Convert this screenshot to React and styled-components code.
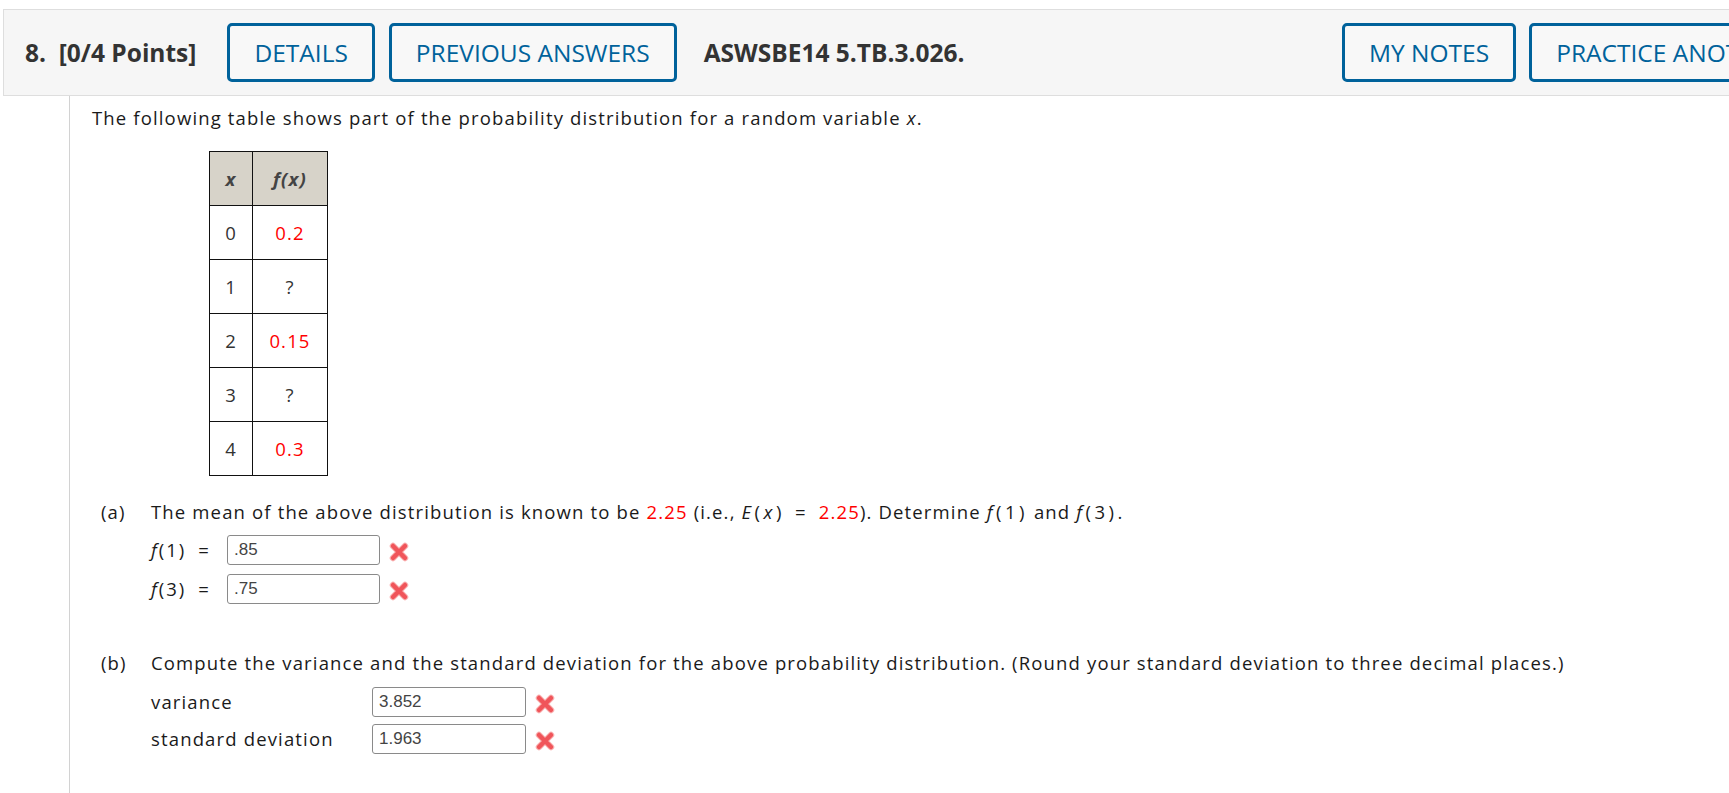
import React from 'react';
import styled, { createGlobalStyle } from 'styled-components';

const GlobalStyle = createGlobalStyle`
  html, body {
    margin: 0;
    padding: 0;
    background: #fff;
    overflow: hidden;
  }
`;

const Page = styled.div`
  width: 1900px;
  padding-top: 9px;
`;

const Header = styled.div`
  display: flex;
  align-items: center;
  height: 85px;
  margin-left: 3px;
  padding-left: 21px;
  padding-right: 86px;
  background: #f6f6f6;
  border: 1px solid #dedede;
  font-family: 'Open Sans', sans-serif;
  font-size: 24.5px;
`;

const Points = styled.div`
  font-weight: 700;
  color: #333;
  margin-right: 31px;
  white-space: pre;
`;

const HeadButton = styled.button`
  flex-shrink: 0;
  height: 59px;
  padding: 0 24px;
  margin-right: ${(p) => p.$gap ?? 14}px;
  background: #f8f8f8;
  border: 3px solid #00629b;
  border-radius: 5px;
  color: #00629b;
  font-family: 'Open Sans', sans-serif;
  font-size: 24.5px;
  white-space: nowrap;
`;

const Title = styled.div`
  flex: 1;
  margin-left: 13px;
  font-weight: 700;
  color: #333;
  white-space: nowrap;
`;

const Content = styled.div`
  margin-left: 69px;
  height: calc(100vh - 96px);
  border-left: 1px solid #d2d2d2;
  padding: 11px 0 0 22px;
  font-family: 'Open Sans', 'Noto Sans', sans-serif;
  font-size: 18.5px;
  letter-spacing: 1.15px;
  line-height: 22px;
  color: #1a1a1a;
`;

const Prompt = styled.p`
  margin: 0;
`;

const DistTable = styled.table`
  margin: 22px 0 0 117px;
  border-collapse: collapse;
  color: #333;

  th, td {
    border: 1.5px solid #111;
    height: 53px;
    padding: 0;
    text-align: center;
  }
  th {
    background: #d7d3c9;
    font-style: italic;
    font-weight: 700;
    color: #444;
  }
  .c1 {
    width: 42px;
  }
  .c2 {
    width: 74px;
  }
`;

const Red = styled.span`
  color: #f00;
`;

const Math = styled.span`
  letter-spacing: ${(p) => p.$ls ?? 3.5}px;
`;

const Eq = styled.span`
  margin: 0 12px 0 10px;
`;

const Part = styled.div`
  display: flex;
  margin: ${(p) => p.$top}px 0 0 9px;
`;

const PartLabel = styled.div`
  width: 50px;
  flex-shrink: 0;
`;

const PartBody = styled.div`
  display: flex;
  flex-direction: column;
`;

const AnswerRow = styled.div`
  display: flex;
  align-items: center;
  height: 31px;
  margin-top: ${(p) => p.$top}px;
`;

const RowLabel = styled.div`
  width: ${(p) => p.$w}px;
  white-space: pre;
`;

const AnswerInput = styled.input`
  box-sizing: border-box;
  width: ${(p) => p.$w || 153}px;
  height: 30px;
  padding: 0 6px;
  border: 1px solid #8a8a8a;
  border-radius: 3px;
  background: #fff;
  font-family: 'Liberation Sans', Arial, sans-serif;
  font-size: 17px;
  letter-spacing: 0;
  color: #444;
  outline: none;
`;

const WrongMark = styled.svg`
  width: 20px;
  height: 20px;
  margin-left: 9px;
  margin-top: 4px;
`;

function Wrong() {
  return (
    <WrongMark viewBox="0 0 20 20">
      <path d="M4 4 L16 16 M16 4 L4 16" stroke="#f9b4b4" strokeWidth="6.5" strokeLinecap="round" />
      <path d="M4 4 L16 16 M16 4 L4 16" stroke="#f0555a" strokeWidth="4.5" strokeLinecap="round" />
    </WrongMark>
  );
}

const rows = [
  ['0', <Red>0.2</Red>],
  ['1', '?'],
  ['2', <Red>0.15</Red>],
  ['3', '?'],
  ['4', <Red>0.3</Red>],
];

export default function App() {
  return (
    <>
      <GlobalStyle />
      <Page>
        <Header>
          <Points>8.  [0/4 Points]</Points>
          <HeadButton>DETAILS</HeadButton>
          <HeadButton>PREVIOUS ANSWERS</HeadButton>
          <Title>ASWSBE14 5.TB.3.026.</Title>
          <HeadButton $gap={13}>MY NOTES</HeadButton>
          <HeadButton $gap={0}>PRACTICE ANOTHER</HeadButton>
        </Header>
        <Content>
          <Prompt>
            The following table shows part of the probability distribution for a random variable <i>x</i>.
          </Prompt>
          <DistTable>
            <thead>
              <tr>
                <th className="c1">x</th>
                <th className="c2">f(x)</th>
              </tr>
            </thead>
            <tbody>
              {rows.map(([x, fx]) => (
                <tr key={x}>
                  <td>{x}</td>
                  <td>{fx}</td>
                </tr>
              ))}
            </tbody>
          </DistTable>

          <Part $top={25}>
            <PartLabel>(a)</PartLabel>
            <PartBody>
              <div>
                The mean of the above distribution is known to be <Red>2.25</Red> (i.e.,{' '}
                <Math>
                  <i>E</i>(<i>x</i>)
                </Math>
                <Eq>=</Eq>
                <Red>2.25</Red>). Determine{' '}
                <Math>
                  <i>f</i>(1)
                </Math>{' '}
                and{' '}
                <Math>
                  <i>f</i>(3)
                </Math>
                .
              </div>
              <AnswerRow $top={11}>
                <RowLabel $w={76}>
                  <Math $ls={2}>
                    <i>f</i>(1)
                  </Math>
                  {'  ='}
                </RowLabel>
                <AnswerInput readOnly value=".85" />
                <Wrong />
              </AnswerRow>
              <AnswerRow $top={8}>
                <RowLabel $w={76}>
                  <Math $ls={2}>
                    <i>f</i>(3)
                  </Math>
                  {'  ='}
                </RowLabel>
                <AnswerInput readOnly value=".75" />
                <Wrong />
              </AnswerRow>
            </PartBody>
          </Part>

          <Part $top={48}>
            <PartLabel>(b)</PartLabel>
            <PartBody>
              <div>
                Compute the variance and the standard deviation for the above probability distribution. (Round your
                standard deviation to three decimal places.)
              </div>
              <AnswerRow $top={12}>
                <RowLabel $w={221}>variance</RowLabel>
                <AnswerInput readOnly value="3.852" $w={154} />
                <Wrong />
              </AnswerRow>
              <AnswerRow $top={6}>
                <RowLabel $w={221}>standard deviation</RowLabel>
                <AnswerInput readOnly value="1.963" $w={154} />
                <Wrong />
              </AnswerRow>
            </PartBody>
          </Part>
        </Content>
      </Page>
    </>
  );
}
